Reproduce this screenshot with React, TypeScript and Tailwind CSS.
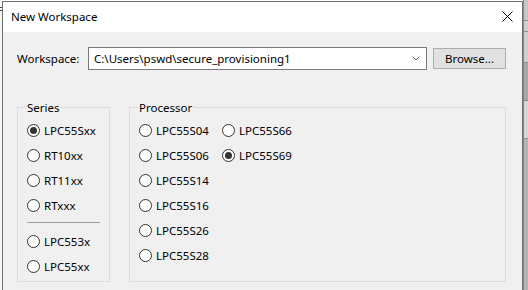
import React from "react";

function Radio({ label, checked = false }: { label: string; checked?: boolean }) {
  return (
    <div className="flex h-[25px] items-center">
      <span className="flex h-[13px] w-[13px] shrink-0 items-center justify-center rounded-full border border-[#333333] bg-white">
        {checked && <span className="h-[7px] w-[7px] rounded-full bg-[#333333]" />}
      </span>
      <span className="ml-[4px] whitespace-nowrap leading-none">{label}</span>
    </div>
  );
}

function GroupBox({
  title,
  className,
  children,
}: {
  title: string;
  className: string;
  children: React.ReactNode;
}) {
  return (
    <div className={"relative h-[175px] border border-[#dcdcdc] " + className}>
      <span className="absolute left-[8px] top-[-8px] bg-[#f0f0f0] px-[1px] leading-[15px]">{title}</span>
      {children}
    </div>
  );
}

export default function App() {
  return (
    <div
      className="flex h-[290px] w-[528px] overflow-hidden bg-white text-[11.5px] text-black"
      style={{ fontFamily: '"Noto Sans", "Liberation Sans", sans-serif' }}
    >
      {/* background app sliver on the left */}
      <div className="flex w-[2px] shrink-0 flex-col bg-[#f4f4f4]">
        <div className="mt-[7px] h-[1px] bg-[#444]" />
        <div className="mt-[2px] h-[1px] bg-[#444]" />
      </div>

      {/* dialog */}
      <div className="mt-[1px] flex h-[300px] w-[521px] shrink-0 flex-col border-l border-r border-t border-[#6e6e6e]">
        {/* title bar */}
        <div className="flex h-[30px] shrink-0 items-center justify-between bg-white pl-[8px] pr-[9px]">
          <span className="text-[11.5px]">New Workspace</span>
          <svg width="11" height="11" viewBox="0 0 11 11" className="mb-[1px]">
            <path d="M0.5 0.5 L10.5 10.5 M10.5 0.5 L0.5 10.5" stroke="#000" strokeWidth="1" fill="none" />
          </svg>
        </div>

        {/* content */}
        <div className="flex flex-1 flex-col bg-[#f0f0f0] pl-[14px]">
          {/* workspace row */}
          <div className="mt-[15px] flex items-start">
            <div className="flex h-[23px] w-[71px] items-center">Workspace:</div>
            <div className="flex h-[23px] w-[339px] items-center justify-between border border-[#7a7a7a] bg-white pl-[5px] pr-[6px]">
              <span className="whitespace-nowrap">C:\Users\pswd\secure_provisioning1</span>
              <svg width="8" height="5" viewBox="0 0 8 5">
                <path d="M0.5 0.5 L4 4 L7.5 0.5" stroke="#606060" strokeWidth="1" fill="none" />
              </svg>
            </div>
            <div className="ml-[6px] mt-[1px] flex h-[21px] w-[73px] items-center justify-center border border-[#adadad] bg-[#e1e1e1]">
              Browse...
            </div>
          </div>

          {/* group boxes */}
          <div className="mt-[37px] flex items-start">
            <GroupBox title="Series" className="w-[93px]">
              <div className="flex flex-col pl-[9px] pt-[10px]">
                <Radio label="LPC55Sxx" checked />
                <Radio label="RT10xx" />
                <Radio label="RT11xx" />
                <Radio label="RTxxx" />
                <div className="mr-[9px] mt-[4px] h-[1px] bg-[#a0a0a0]" />
                <div className="mt-[6px]">
                  <Radio label="LPC553x" />
                  <Radio label="LPC55xx" />
                </div>
              </div>
            </GroupBox>

            <GroupBox title="Processor" className="ml-[19px] w-[377px]">
              <div className="flex pl-[9px] pt-[10px]">
                <div className="flex w-[83px] flex-col">
                  <Radio label="LPC55S04" />
                  <Radio label="LPC55S06" />
                  <Radio label="LPC55S14" />
                  <Radio label="LPC55S16" />
                  <Radio label="LPC55S26" />
                  <Radio label="LPC55S28" />
                </div>
                <div className="flex flex-col">
                  <Radio label="LPC55S66" />
                  <Radio label="LPC55S69" checked />
                </div>
              </div>
            </GroupBox>
          </div>
        </div>
      </div>

      {/* background app sliver on the right */}
      <div className="flex w-[5px] shrink-0 flex-col border-l border-[#8a8a8a]">
        <div className="h-[20px] bg-[#c6c6c6]" />
        <div className="h-[1px] bg-[#8c8c8c]" />
        <div className="h-[10px] bg-[#cfcfcf]" />
        <div className="h-[1px] bg-[#8c8c8c]" />
        <div className="h-[30px] bg-[#cfcfcf]" />
        <div className="h-[1px] bg-[#8c8c8c]" />
        <div className="h-[37px] bg-[#a6a6a6]" />
        <div className="h-[1px] bg-[#8c8c8c]" />
        <div className="h-[37px] bg-[#d6d6d6]" />
        <div className="h-[1px] bg-[#8c8c8c]" />
        <div className="flex-1 bg-[#b4b4b4]" />
      </div>
    </div>
  );
}
